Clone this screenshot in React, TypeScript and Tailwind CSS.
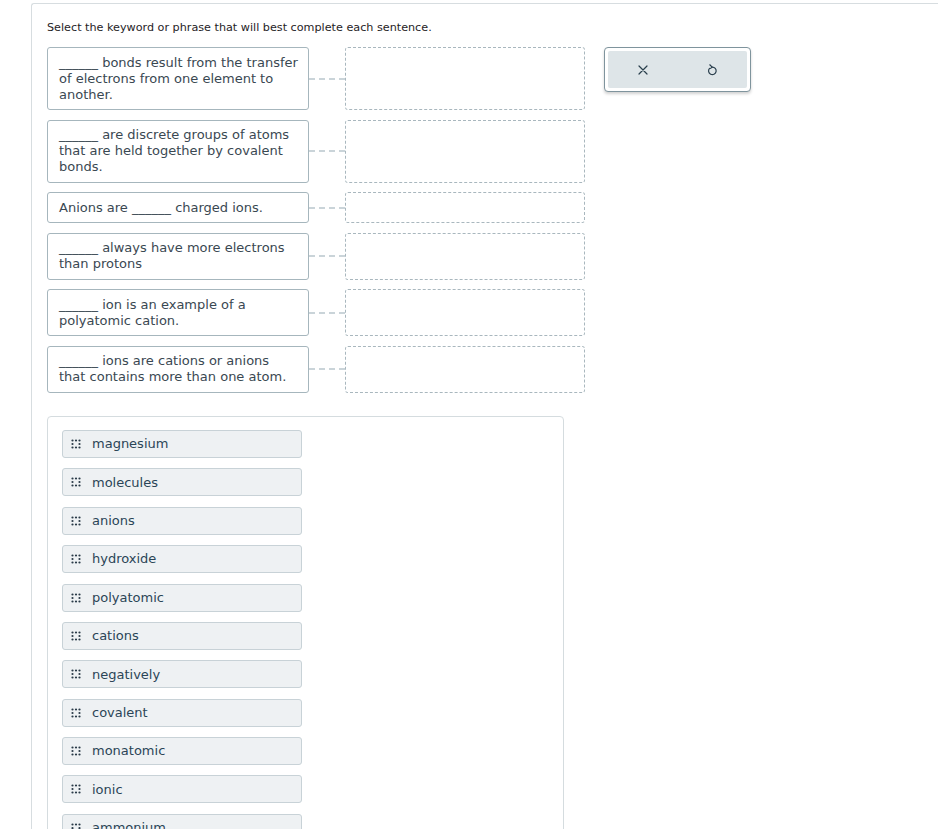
import React from "react";

const sentences = [
  { id: 1, before: "", after: " bonds result from the transfer of electrons from one element to another." },
  { id: 2, before: "", after: " are discrete groups of atoms that are held together by covalent bonds." },
  { id: 3, before: "Anions are ", after: " charged ions." },
  { id: 4, before: "", after: " always have more electrons than protons" },
  { id: 5, before: "", after: " ion is an example of a polyatomic cation." },
  { id: 6, before: "", after: " ions are cations or anions that contains more than one atom." },
];

const words = [
  "magnesium",
  "molecules",
  "anions",
  "hydroxide",
  "polyatomic",
  "cations",
  "negatively",
  "covalent",
  "monatomic",
  "ionic",
  "ammonium",
];

function DragHandle() {
  const dots = [
    [1.5, 1.5], [5, 1.5], [8.5, 1.5],
    [1.5, 5], [8.5, 5],
    [1.5, 8.5], [5, 8.5], [8.5, 8.5],
  ];
  return (
    <svg width="10" height="10" viewBox="0 0 10 10" className="shrink-0">
      {dots.map(([cx, cy], i) => (
        <circle key={i} cx={cx} cy={cy} r="1.1" fill="#2a3b48" />
      ))}
    </svg>
  );
}

// reset arrow: circle open at the top-left, arrow tick on top
function UndoIcon() {
  return (
    <svg width="12" height="13" viewBox="0 0 12 13" fill="none" stroke="#2a3f4d" strokeWidth="1.2" strokeLinecap="round" strokeLinejoin="round">
      <path d="M3.5 5.4 A3.8 3.8 0 1 0 6.2 4.1" />
      <path d="M3.8 1.8 L6.2 4.1 L4.6 5.4" />
    </svg>
  );
}

export default function App() {
  return (
    <div className="h-[829px] overflow-hidden bg-white font-['DejaVu_Sans',Verdana,sans-serif]">
      <div className="ml-[31px] mt-[3px] w-[1000px] min-h-[900px] border-l border-t border-[#d7dde0] rounded-tl-[3px] pl-[15px] pt-[17px]">
        <p className="text-[11.2px] leading-[13px] text-[#1f2326]">
          Select the keyword or phrase that will best complete each sentence.
        </p>

        <div className="mt-[13px] flex items-start gap-[19px]">
          {/* Sentences with drop targets */}
          <div className="flex flex-col gap-[9.6px]">
            {sentences.map((s) => (
              <div key={s.id} className="flex items-stretch">
                <div className="w-[262px] border border-[#a6b6bd] rounded-[3px] pl-[11px] pr-[9px] py-[6.5px] text-[13px] leading-[16px] text-[#3a4852]">
                  {s.before}
                  <span>______</span>
                  {s.after}
                </div>
                <div className="w-[36px] flex items-center">
                  <div className="w-full border-t-2 border-dashed border-[#cad4d9]" />
                </div>
                <div className="w-[240px] border border-dashed border-[#a9b7be] rounded-[3px]" />
              </div>
            ))}
          </div>

          {/* Clear / reset buttons */}
          <div className="w-[147px] h-[45px] border border-[#7f949d] rounded-[4px] bg-white p-[3px] shadow-[0_2px_3px_rgba(0,0,0,0.18)]">
            <div className="h-full flex bg-[#dee5e8] rounded-[2px]">
              <button className="flex-1 flex items-center justify-center">
                <svg width="10" height="10" viewBox="0 0 10 10" stroke="#2a3f4d" strokeWidth="1.2" strokeLinecap="round">
                  <path d="M1 1 L9 9 M9 1 L1 9" />
                </svg>
              </button>
              <button className="flex-1 flex items-center justify-center">
                <UndoIcon />
              </button>
            </div>
          </div>
        </div>

        {/* Word bank */}
        <div className="mt-[23px] w-[517px] min-h-[500px] border border-[#d5dcdf] rounded-[4px] pl-[14px] pt-[13px] flex flex-col gap-[10.4px]">
          {words.map((w) => (
            <div
              key={w}
              className="w-[240px] h-[28px] shrink-0 flex items-center gap-[11px] pl-[8px] bg-[#eef1f3] border border-[#c8d2d7] rounded-[3px] text-[13px] text-[#2b4557]"
            >
              <DragHandle />
              <span>{w}</span>
            </div>
          ))}
        </div>
      </div>
    </div>
  );
}
